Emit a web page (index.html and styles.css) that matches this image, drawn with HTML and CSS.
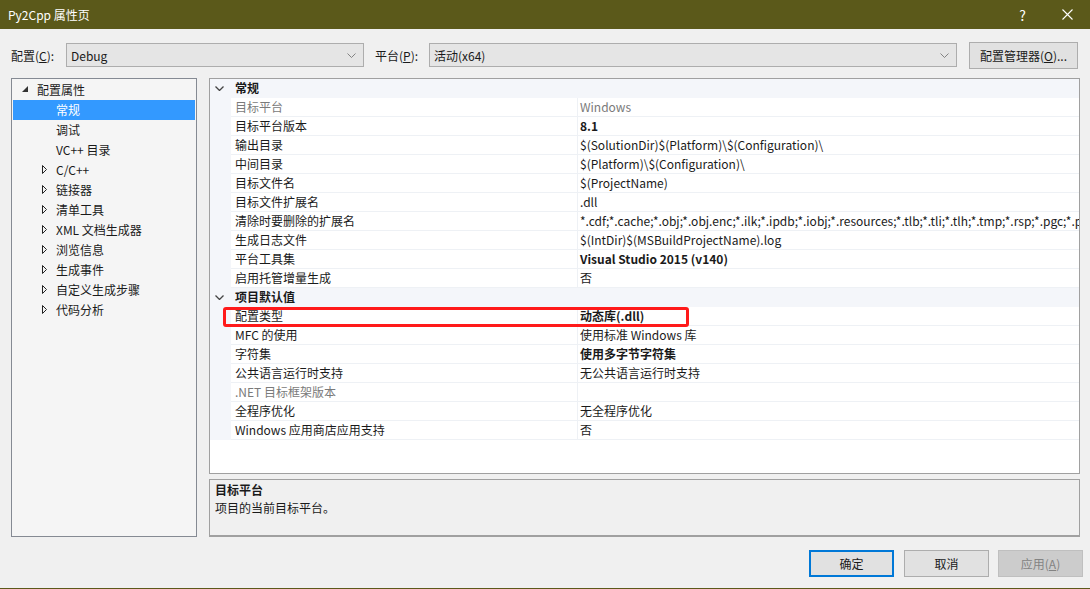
FILE: index.html
```html
<!DOCTYPE html>
<html lang="zh-CN">
<head>
  <meta charset="UTF-8">
  <title>Py2Cpp 属性页</title>
  <link rel="stylesheet" href="styles.css">
</head>
<body>

<div class="window">
  <div class="titlebar">
    <div class="title">Py2Cpp 属性页</div>
    <div class="title-btn">?</div>
    <div class="title-btn">
      <svg width="11" height="11" viewBox="0 0 11 11"><path d="M0.5 0.5 L10.5 10.5 M10.5 0.5 L0.5 10.5" stroke="#fff" stroke-width="1.1"/></svg>
    </div>
  </div>

  <div class="toolbar">
    <div class="tb-label lbl-config">配置(<u>C</u>):</div>
    <div class="combo combo-config">
      <span>Debug</span>
      <svg width="9" height="5" viewBox="0 0 9 5"><path d="M0.5 0.5 L4.5 4.5 L8.5 0.5" fill="none" stroke="#777" stroke-width="0.9"/></svg>
    </div>
    <div class="tb-label lbl-platform">平台(<u>P</u>):</div>
    <div class="combo combo-platform">
      <span>活动(x64)</span>
      <svg width="9" height="5" viewBox="0 0 9 5"><path d="M0.5 0.5 L4.5 4.5 L8.5 0.5" fill="none" stroke="#777" stroke-width="0.9"/></svg>
    </div>
    <button class="btn btn-manager">配置管理器(<u>O</u>)...</button>
  </div>

  <div class="main">
    <div class="tree">
      <div class="tree-row root">
        <span class="exp"><svg width="6" height="6" viewBox="0 0 6 6"><polygon points="6,0 6,6 0,6" fill="#333"/></svg></span>
        <span>配置属性</span>
      </div>
      <div class="tree-row child selected"><span class="exp"></span><span>常规</span></div>
      <div class="tree-row child"><span class="exp"></span><span>调试</span></div>
      <div class="tree-row child"><span class="exp"></span><span>VC++ 目录</span></div>
      <div class="tree-row child"><span class="exp"><svg class="tri" width="5" height="9" viewBox="0 0 5 9"><polygon points="0.5,0.5 4.5,4.5 0.5,8.5" fill="none" stroke="#222" stroke-width="1"/></svg></span><span>C/C++</span></div>
      <div class="tree-row child"><span class="exp"><svg class="tri" width="5" height="9" viewBox="0 0 5 9"><polygon points="0.5,0.5 4.5,4.5 0.5,8.5" fill="none" stroke="#222" stroke-width="1"/></svg></span><span>链接器</span></div>
      <div class="tree-row child"><span class="exp"><svg class="tri" width="5" height="9" viewBox="0 0 5 9"><polygon points="0.5,0.5 4.5,4.5 0.5,8.5" fill="none" stroke="#222" stroke-width="1"/></svg></span><span>清单工具</span></div>
      <div class="tree-row child"><span class="exp"><svg class="tri" width="5" height="9" viewBox="0 0 5 9"><polygon points="0.5,0.5 4.5,4.5 0.5,8.5" fill="none" stroke="#222" stroke-width="1"/></svg></span><span>XML 文档生成器</span></div>
      <div class="tree-row child"><span class="exp"><svg class="tri" width="5" height="9" viewBox="0 0 5 9"><polygon points="0.5,0.5 4.5,4.5 0.5,8.5" fill="none" stroke="#222" stroke-width="1"/></svg></span><span>浏览信息</span></div>
      <div class="tree-row child"><span class="exp"><svg class="tri" width="5" height="9" viewBox="0 0 5 9"><polygon points="0.5,0.5 4.5,4.5 0.5,8.5" fill="none" stroke="#222" stroke-width="1"/></svg></span><span>生成事件</span></div>
      <div class="tree-row child"><span class="exp"><svg class="tri" width="5" height="9" viewBox="0 0 5 9"><polygon points="0.5,0.5 4.5,4.5 0.5,8.5" fill="none" stroke="#222" stroke-width="1"/></svg></span><span>自定义生成步骤</span></div>
      <div class="tree-row child"><span class="exp"><svg class="tri" width="5" height="9" viewBox="0 0 5 9"><polygon points="0.5,0.5 4.5,4.5 0.5,8.5" fill="none" stroke="#222" stroke-width="1"/></svg></span><span>代码分析</span></div>
    </div>

    <div class="right">
      <div class="grid">
        <div class="grid-row category">
          <div class="gutter"><svg width="9" height="5" viewBox="0 0 9 5"><path d="M0.5 0.5 L4.5 4.5 L8.5 0.5" fill="none" stroke="#444" stroke-width="1.3"/></svg></div>
          <div class="cat-name">常规</div>
        </div>
        <div class="grid-row disabled"><div class="gutter"></div><div class="name">目标平台</div><div class="value">Windows</div></div>
        <div class="grid-row"><div class="gutter"></div><div class="name">目标平台版本</div><div class="value bold">8.1</div></div>
        <div class="grid-row"><div class="gutter"></div><div class="name">输出目录</div><div class="value">$(SolutionDir)$(Platform)\$(Configuration)\</div></div>
        <div class="grid-row"><div class="gutter"></div><div class="name">中间目录</div><div class="value">$(Platform)\$(Configuration)\</div></div>
        <div class="grid-row"><div class="gutter"></div><div class="name">目标文件名</div><div class="value">$(ProjectName)</div></div>
        <div class="grid-row"><div class="gutter"></div><div class="name">目标文件扩展名</div><div class="value">.dll</div></div>
        <div class="grid-row"><div class="gutter"></div><div class="name">清除时要删除的扩展名</div><div class="value">*.cdf;*.cache;*.obj;*.obj.enc;*.ilk;*.ipdb;*.iobj;*.resources;*.tlb;*.tli;*.tlh;*.tmp;*.rsp;*.pgc;*.pgd;*.meta;*.tlog;*.manifest;*.res;*.pch;*.exp;*.idb;*.rep;*.xdc;*.pdb</div></div>
        <div class="grid-row"><div class="gutter"></div><div class="name">生成日志文件</div><div class="value">$(IntDir)$(MSBuildProjectName).log</div></div>
        <div class="grid-row"><div class="gutter"></div><div class="name">平台工具集</div><div class="value bold">Visual Studio 2015 (v140)</div></div>
        <div class="grid-row"><div class="gutter"></div><div class="name">启用托管增量生成</div><div class="value">否</div></div>
        <div class="grid-row category">
          <div class="gutter"><svg width="9" height="5" viewBox="0 0 9 5"><path d="M0.5 0.5 L4.5 4.5 L8.5 0.5" fill="none" stroke="#444" stroke-width="1.3"/></svg></div>
          <div class="cat-name">项目默认值</div>
        </div>
        <div class="grid-row"><div class="gutter"></div><div class="name">配置类型</div><div class="value bold">动态库(.dll)</div></div>
        <div class="grid-row"><div class="gutter"></div><div class="name">MFC 的使用</div><div class="value">使用标准 Windows 库</div></div>
        <div class="grid-row"><div class="gutter"></div><div class="name">字符集</div><div class="value bold">使用多字节字符集</div></div>
        <div class="grid-row"><div class="gutter"></div><div class="name">公共语言运行时支持</div><div class="value">无公共语言运行时支持</div></div>
        <div class="grid-row disabled"><div class="gutter"></div><div class="name">.NET 目标框架版本</div><div class="value"></div></div>
        <div class="grid-row"><div class="gutter"></div><div class="name">全程序优化</div><div class="value">无全程序优化</div></div>
        <div class="grid-row"><div class="gutter"></div><div class="name">Windows 应用商店应用支持</div><div class="value">否</div></div>

        <div class="highlight"></div>
      </div>

      <div class="desc">
        <div class="desc-title">目标平台</div>
        <div>项目的当前目标平台。</div>
      </div>
    </div>
  </div>

  <div class="buttons">
    <button class="btn btn-ok">确定</button>
    <button class="btn">取消</button>
    <button class="btn btn-disabled">应用(<u>A</u>)</button>
  </div>
</div>

</body>
</html>
```

FILE: styles.css
```css
* { box-sizing: border-box; }
body {
  margin: 0; background-color: #f0f0f0; color: #1a1a1a;
  font-family: "Noto Sans CJK SC", "DejaVu Sans", sans-serif; font-size: 12px;
}
u { text-decoration: underline; text-underline-offset: 1px; }

.window {
  width: 1090px; height: 589px; border-bottom: 1px solid #5b591a;
  display: flex; flex-direction: column;
}

/* title bar */
.titlebar {
  height: 29px; background-color: #5b591a; color: #fff;
  display: flex; align-items: center; padding-left: 8px;
}
.title { flex: 1; }
.title-btn {
  width: 45px; height: 29px; font-size: 14px;
  display: flex; align-items: center; justify-content: center;
}

/* toolbar */
.toolbar {
  height: 49px; padding: 3px 0 0 11px;
  display: flex; align-items: center;
}
.tb-label { white-space: nowrap; }
.lbl-config { width: 55px; }
.lbl-platform { width: 54px; margin-left: 11px; }
.combo {
  height: 24px; border: 1px solid #adadad; background-color: #e5e5e5;
  display: flex; align-items: center; justify-content: space-between;
  padding: 0 7px 0 4px;
}
.combo-config { width: 298px; }
.combo-platform { width: 528px; }

.btn {
  width: 85px; height: 27px; background-color: #e1e1e1; border: 1px solid #adadad;
  font-family: inherit; font-size: 12px; color: #1a1a1a; padding: 0;
}
.btn-manager { width: 109px; margin-left: 12px; margin-top: 1px; }

/* main area */
.main {
  height: 459px; padding: 0 10px 0 11px;
  display: flex; gap: 12px;
}
.tree {
  width: 186px; height: 100%; border: 1px solid #858a93; background-color: #f5f5f5;
  padding: 1px;
}
.tree-row { height: 20px; padding-bottom: 2px; display: flex; align-items: center; white-space: nowrap; }
.tree-row .exp { width: 16px; display: flex; align-items: center; }
.tree-row.root { padding-left: 8px; }
.tree-row.root svg { margin-left: 1px; }
.tree-row.child { padding-left: 27px; }
.tree-row .tri { margin-left: 2px; margin-top: 1px; }
.tree-row.selected { background-color: #3399ff; color: #fff; }

.right { flex: 1; display: flex; flex-direction: column; gap: 5px; }

.grid {
  height: 396px; border: 1px solid #a0a0a0; background-color: #fff;
  position: relative; overflow: hidden;
}
.grid-row {
  height: 19px; display: grid; grid-template-columns: 21px 346px 1fr;
  line-height: 18px;
}
.grid-row .gutter { background-color: #f4f6fa; display: flex; align-items: center; padding-left: 5px; }
.grid-row .name, .grid-row .value {
  border-bottom: 1px solid #eef1f5; padding-left: 4px;
  white-space: nowrap; overflow: hidden;
}
.grid-row .value { border-left: 1px solid #eef1f5; padding-left: 2px; }
.grid-row.category { background-color: #f4f6fa; }
.grid-row .cat-name { grid-column: 2 / 4; font-weight: bold; padding-left: 4px; }
.grid-row.disabled .name, .grid-row.disabled .value { color: #7a7a7a; }
.bold { font-weight: bold; }

.highlight {
  position: absolute; left: 13px; top: 228px; width: 466px; height: 20px;
  border: 3px solid #ff1a1a; border-radius: 3px;
}

.desc {
  height: 58px; border: 1px solid #a0a0a0; border-bottom-width: 2px;
  background-color: #f0f0f0; padding: 1px 5px; line-height: 18px;
}
.desc-title { font-weight: bold; }

/* dialog buttons */
.buttons {
  margin-top: 13px; padding-right: 7px;
  display: flex; justify-content: flex-end; gap: 10px;
}
.btn-ok { border: 2px solid #0078d7; }
.btn-disabled { background-color: #cccccc; border-color: #bfbfbf; color: #838383; margin-left: -1px; }
```
